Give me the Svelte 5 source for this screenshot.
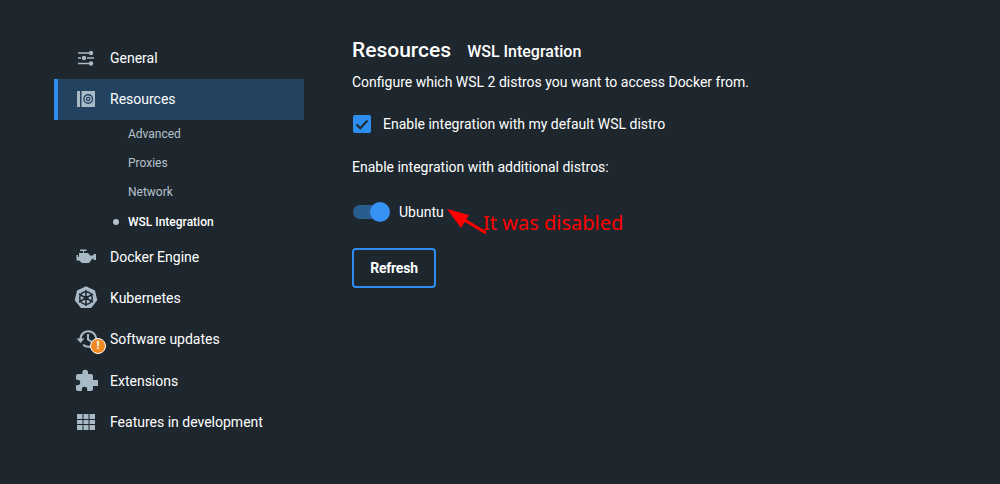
<script lang="ts">
    const subItems = [
        { label: "Advanced", active: false },
        { label: "Proxies", active: false },
        { label: "Network", active: false },
        { label: "WSL Integration", active: true },
    ];
</script>

<div class="page">
    <nav class="sidebar">
        <div class="nav-item">
            <svg class="icon" viewBox="0 0 24 24">
                <path d="M4 7h11M4 12h3M13 12h7M4 17.500h11" class="line" />
                <circle cx="17" cy="7" r="2.200" /><circle cx="10" cy="12" r="2.200" /><circle cx="17" cy="17.500" r="2.200" />
            </svg>
            General
        </div>
        <div class="nav-item active">
            <svg class="icon" viewBox="0 0 24 24">
                <path d="M3 4h3v16H3zM7.500 4H21v16H7.500z" />
                <circle cx="14.200" cy="12" r="5" class="cut" />
                <circle cx="14.200" cy="12" r="3.600" />
                <circle cx="14.200" cy="12" r="2.300" class="cut" />
                <circle cx="14.200" cy="12" r="1" />
            </svg>
            Resources
        </div>
        <ul class="sub-list">
            {#each subItems as item}
                <li class="sub-item" class:active={item.active}>{item.label}</li>
            {/each}
        </ul>
        <div class="nav-item">
            <svg class="icon" viewBox="0 0 24 24">
                <path d="M6 4.500h6.500v1.500H10v2h4l2 2.500h3.500v-1.500H22v6h-2.500V13.500h-1L15 18H8l-3-2.500H2.500v-5.500H4V12h1V8h4V6H6z" />
            </svg>
            Docker Engine
        </div>
        <div class="nav-item">
            <svg class="icon k8s" viewBox="0 0 24 24">
                <path d="M12 0.300l9 4.300 2.300 9.700-6.200 7.700H6.900L0.700 14.300 3 4.600z" />
                <g class="wheel">
                    <circle cx="12" cy="12" r="6.300" />
                    <circle cx="12" cy="12" r="1.600" />
                    <path d="M12 4v16M5 8l14 8M19 8L5 16" />
                </g>
            </svg>
            Kubernetes
        </div>
        <div class="nav-item">
            <span class="icon-wrap">
                <svg class="icon" viewBox="0 0 24 24">
                    <path class="stroke" d="M6.500 12a7.800 7.800 0 1 1 2.600 5.800" />
                    <path d="M2.500 11.500h8l-4 4.500z" />
                    <path class="stroke" d="M14 7v5.500l4 2.500" />
                </svg>
                <span class="badge">!</span>
            </span>
            Software updates
        </div>
        <div class="nav-item">
            <svg class="icon" viewBox="0 0 24 24">
                <path d="M20.500 11H19V7c0-1.100-.9-2-2-2h-3V3.500a2.800 2.800 0 0 0-5.600 0V5H4c-1.100 0-2 .9-2 2v3.800h1.500a2.700 2.700 0 0 1 0 5.400H2V20c0 1.100.9 2 2 2h3.800v-1.500a2.700 2.700 0 0 1 5.400 0V22H17c1.100 0 2-.9 2-2v-3h3.500a3 3 0 0 0 0-6z" />
            </svg>
            Extensions
        </div>
        <div class="nav-item">
            <svg class="icon" viewBox="0 0 24 24">
                <path d="M3 4h5.500v5H3zM9.500 4h5v5h-5zM15.500 4H21v5h-5.500zM3 10h5.500v4H3zM9.500 10h5v4h-5zM15.500 10H21v4h-5.500zM3 15h5.500v5H3zM9.500 15h5v5h-5zM15.500 15H21v5h-5.500z" />
            </svg>
            Features in development
        </div>
    </nav>

    <main class="content">
        <header class="heading">
            <h1>Resources</h1>
            <h2>WSL Integration</h2>
        </header>
        <p class="intro">Configure which WSL 2 distros you want to access Docker from.</p>
        <div class="check-row">
            <span class="checkbox">
                <svg viewBox="0 0 18 18"><path d="M3.500 9.500l3.800 3.700 7.200-7.700" /></svg>
            </span>
            Enable integration with my default WSL distro
        </div>
        <p class="additional">Enable integration with additional distros:</p>
        <div class="toggle-row">
            <span class="toggle"><span class="knob"></span></span>
            <span>Ubuntu</span>
        </div>
        <button class="refresh">Refresh</button>
    </main>

    <!-- screenshot annotation drawn over the page -->
    <svg class="arrow" viewBox="0 0 60 40">
        <path d="M17 14L40 28" />
        <path class="head" d="M1 4L23 10L15 23z" />
    </svg>
    <span class="note">It was disabled</span>
</div>

<style>
    :global(body) {
        margin: 0;
        background: #1e272e;
    }

    .page {
        position: relative;
        display: flex;
        height: 484px;
        overflow: hidden;
        background: #1e272e;
        color: #fff;
        font-family: Roboto, "Liberation Sans", sans-serif;
        font-size: 14px;
    }

    /* ── Sidebar ─────────────────────────────────────────────── */
    .sidebar {
        width: 250px;
        margin-left: 54px;
        padding-top: 37.4px;
        flex-shrink: 0;
    }

    .nav-item {
        display: flex;
        align-items: center;
        gap: 12px;
        height: 41.3px;
        padding-left: 20px;
        box-sizing: border-box;
        font-size: 14px;
    }

    .nav-item.active {
        background: #23425f;
        border-left: 4px solid #2e8ef0;
        padding-left: 16px;
    }

    .icon {
        width: 24px;
        height: 24px;
        fill: #a9bac7;
        flex-shrink: 0;
    }

    .line {
        fill: none;
        stroke: #a9bac7;
        stroke-width: 1.600;
    }

    .cut {
        fill: #23425f;
    }

    .wheel {
        fill: none;
        stroke: #1e272e;
        stroke-width: 1.500;
    }

    .stroke {
        fill: none;
        stroke: #a9bac7;
        stroke-width: 2;
    }

    .icon-wrap {
        position: relative;
        display: flex;
    }

    .badge {
        position: absolute;
        left: 16px;
        top: 11px;
        width: 14px;
        height: 14px;
        border: 1px solid #fff;
        border-radius: 50%;
        background: #f08a24;
        font-size: 11px;
        font-weight: 700;
        line-height: 14px;
        text-align: center;
    }

    .sub-list {
        list-style: none;
        margin: 0;
        padding: 0;
    }

    .sub-item {
        position: relative;
        height: 29px;
        line-height: 28px;
        padding-left: 74px;
        font-size: 12px;
        color: #b5c2cc;
    }

    .sub-item.active {
        line-height: 30px;
        color: #fff;
        font-weight: 500;
    }

    .sub-item.active::before {
        content: "";
        position: absolute;
        left: 59px;
        top: 12px;
        width: 6px;
        height: 6px;
        border-radius: 50%;
        background: #b5c2cc;
    }

    /* ── Main panel ──────────────────────────────────────────── */
    .content {
        margin-left: 48px;
        padding-top: 38px;
        display: flex;
        flex-direction: column;
        align-items: flex-start;
    }

    .heading {
        display: flex;
        align-items: baseline;
        gap: 16px;
        height: 24px;
    }

    h1 {
        margin: 0;
        font-size: 21px;
        font-weight: 500;
        line-height: 24px;
    }

    h2 {
        margin: 0;
        font-size: 16px;
        font-weight: 500;
        line-height: 24px;
    }

    .intro {
        margin: 10px 0 0;
        line-height: 20px;
    }

    .check-row {
        display: flex;
        align-items: center;
        gap: 12px;
        margin: 22px 0 0 1px;
        height: 20px;
    }

    .checkbox {
        display: flex;
        width: 18px;
        height: 18px;
        border-radius: 2px;
        background: #2e8ef0;
    }

    .checkbox path {
        fill: none;
        stroke: #1e272e;
        stroke-width: 2;
    }

    .additional {
        margin: 23px 0 0;
        line-height: 20px;
    }

    .toggle-row {
        display: flex;
        align-items: center;
        gap: 10px;
        margin-top: 25px;
        margin-left: 1px;
        height: 20px;
    }

    .toggle {
        position: relative;
        width: 36px;
        height: 14px;
        border-radius: 7px;
        background: #2a5d8f;
    }

    .knob {
        position: absolute;
        right: -1px;
        top: -3px;
        width: 20px;
        height: 20px;
        border-radius: 50%;
        background: #3592f2;
    }

    .refresh {
        margin-top: 26px;
        width: 84px;
        height: 40px;
        border: 2px solid #2e8ef0;
        border-radius: 4px;
        background: transparent;
        color: #fff;
        font: 700 14px Roboto, "Liberation Sans", sans-serif;
        letter-spacing: -0.2px;
    }

    /* ── Annotation ──────────────────────────────────────────── */
    .arrow {
        position: absolute;
        left: 446px;
        top: 205px;
        width: 60px;
        height: 40px;
    }

    .arrow path {
        fill: none;
        stroke: #ff0000;
        stroke-width: 3;
    }

    .arrow .head {
        fill: #ff0000;
        stroke: none;
    }

    .note {
        position: absolute;
        left: 483px;
        top: 208px;
        color: #ff0000;
        font-family: "Noto Sans", sans-serif;
        font-size: 20px;
        line-height: 30px;
        white-space: nowrap;
    }
</style>
